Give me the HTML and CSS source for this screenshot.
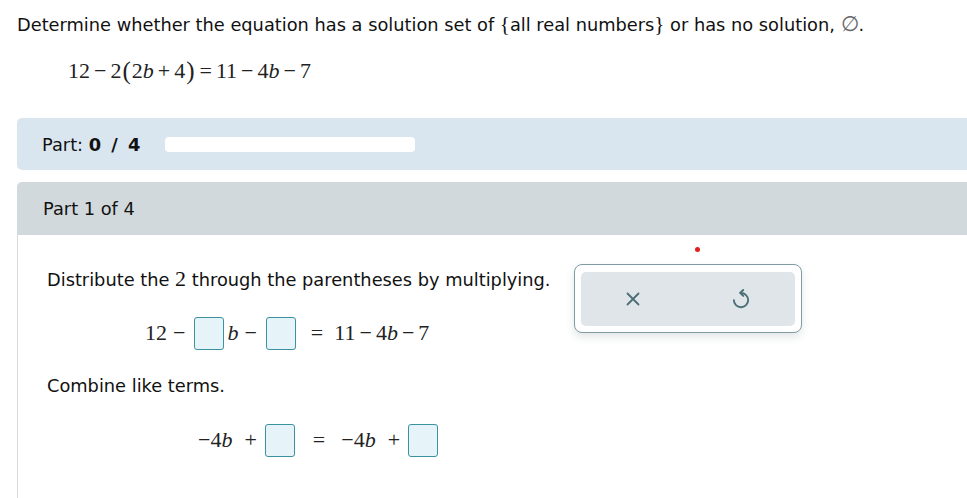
FILE: index.html
```html
<!DOCTYPE html>
<html>
<head>
<meta charset="utf-8">
<link rel="stylesheet" href="styles.css">
</head>
<body>
<div class="page">
  <p class="prompt">Determine whether the equation has a solution set of <span class="m">{</span>all real numbers<span class="m">}</span> or has no solution, <span class="m empty">∅</span>.</p>
  <div class="eq main-eq"><span>12</span><span class="op">−</span><span>2</span><span class="paren">(</span><span>2</span><i>b</i><span class="op">+</span><span>4</span><span class="paren">)</span><span class="op">=</span><span>11</span><span class="op">−</span><span>4</span><i>b</i><span class="op">−</span><span>7</span></div>

  <div class="progress">
    <span class="plabel">Part: <b>0 / 4</b></span>
    <div class="ptrack"></div>
  </div>

  <div class="part">
    <div class="part-head">Part 1 of 4</div>
    <div class="part-body">
      <span class="dot"></span>
      <div class="steps">
        <p class="step-text">Distribute the <span class="m num">2</span> through the parentheses by multiplying.</p>
        <div class="eq row row1">
          <span>12</span><span class="op sp">−</span><span class="box"></span><i class="bvar">b</i><span class="op sp">−</span><span class="box"></span><span class="op eqs">=</span><span>11</span><span class="op">−</span><span>4</span><i>b</i><span class="op">−</span><span>7</span>
        </div>
        <p class="step-text combine">Combine like terms.</p>
        <div class="eq row row2">
          <span>−4</span><i>b</i><span class="op sp">+</span><span class="box"></span><span class="op eqs">=</span><span class="rhs">−4</span><i>b</i><span class="op sp">+</span><span class="box"></span>
        </div>
      </div>
      <div class="tools">
        <div class="tools-inner">
          <svg class="ico" width="14" height="14" viewBox="0 0 14 14"><path d="M1.5 1.5 L12.5 12.5 M12.5 1.5 L1.5 12.5" stroke="#4b6e78" stroke-width="1.8" fill="none" stroke-linecap="round"/></svg>
          <svg class="ico" width="20" height="22" viewBox="0 0 18 20"><path d="M8.5 4.5 H9 A6.5 6.5 0 1 1 2.5 11" stroke="#4b6e78" stroke-width="1.7" fill="none" stroke-linecap="round"/><path d="M11 1.8 L8.2 4.5 L11 7.2" stroke="#4b6e78" stroke-width="1.7" fill="none" stroke-linecap="round" stroke-linejoin="round"/></svg>
        </div>
      </div>
    </div>
  </div>
</div>
</body>
</html>
```

FILE: styles.css
```css
html, body {
  margin: 0;
  padding: 0;
  background: #ffffff;
}
.page {
  padding: 13px 0 0 17px;
  font-family: "DejaVu Sans", Verdana, sans-serif;
  font-size: 17.8px;
  color: #111;
}
.prompt {
  margin: 0;
  line-height: 22px;
}
.m {
  font-family: "Liberation Serif", "Times New Roman", serif;
  font-size: 21px;
}
.empty {
  color: #666;
}
.eq {
  font-family: "Liberation Serif", "Times New Roman", serif;
  font-size: 22px;
  color: #222;
  display: flex;
  align-items: center;
}
.eq i {
  font-style: italic;
}
.main-eq {
  margin: 21px 0 0 51px;
  height: 28px;
}
.main-eq .op {
  margin: 0 4px;
}
.main-eq .paren {
  font-size: 25px;
  margin: 0 1px;
}
.progress {
  margin-top: 33px;
  height: 52px;
  background: #dae6ef;
  border-radius: 5px 0 0 5px;
  display: flex;
  align-items: center;
  padding-left: 25px;
}
.plabel {
  width: 123px;
}
.plabel b {
  font-weight: bold;
  word-spacing: 4px;
}
.ptrack {
  width: 250px;
  height: 15px;
  background: #fff;
  border-radius: 4px;
}
.part {
  margin-top: 12px;
}
.part-head {
  height: 53px;
  background: #d1d9dc;
  border-radius: 5px 0 0 0;
  display: flex;
  align-items: center;
  padding-left: 26px;
}
.part-body {
  position: relative;
  border-left: 1px solid #d9d9d9;
  display: flex;
  align-items: flex-start;
  height: 270px;
}
.dot {
  position: absolute;
  left: 677px;
  top: 12px;
  width: 5px;
  height: 5px;
  border-radius: 50%;
  background: #e0201c;
}
.steps {
  padding: 33px 0 0 29px;
  width: 527px;
}
.step-text {
  margin: 0;
  line-height: 22px;
}
.num {
  font-size: 22px;
}
.row {
  height: 36px;
}
.row1 {
  margin: 24px 0 0 98px;
}
.row .op {
  margin: 0 4px;
}
.row1 .sp {
  margin: 0 9px 0 6px;
}
.row2 .sp {
  margin: 0 8px 0 12px;
}
.row .eqs {
  margin: 0 11px 0 15px;
}
.row2 .eqs {
  margin: 0 16px 0 18px;
}
.bvar {
  margin-left: 3px;
}
.box {
  display: inline-block;
  width: 28px;
  height: 31px;
  background: #e6f4f9;
  border: 1.5px solid #3a92a0;
  border-radius: 3px;
}
.combine {
  margin-top: 24px;
}
.row2 {
  margin: 25px 0 0 151px;
}
.tools {
  margin-top: 29px;
  width: 228px;
  height: 69px;
  border: 1px solid #7f9aa3;
  border-radius: 8px;
  background: #fff;
  box-shadow: 0 4px 8px rgba(60, 80, 90, 0.15);
  padding: 7px 6px 6px 6px;
  box-sizing: border-box;
}
.tools-inner {
  height: 100%;
  background: #dfe5e8;
  border-radius: 5px;
  display: flex;
  align-items: center;
  justify-content: space-between;
  padding: 0 44px 0 45px;
}
.ico {
  display: block;
}
```
